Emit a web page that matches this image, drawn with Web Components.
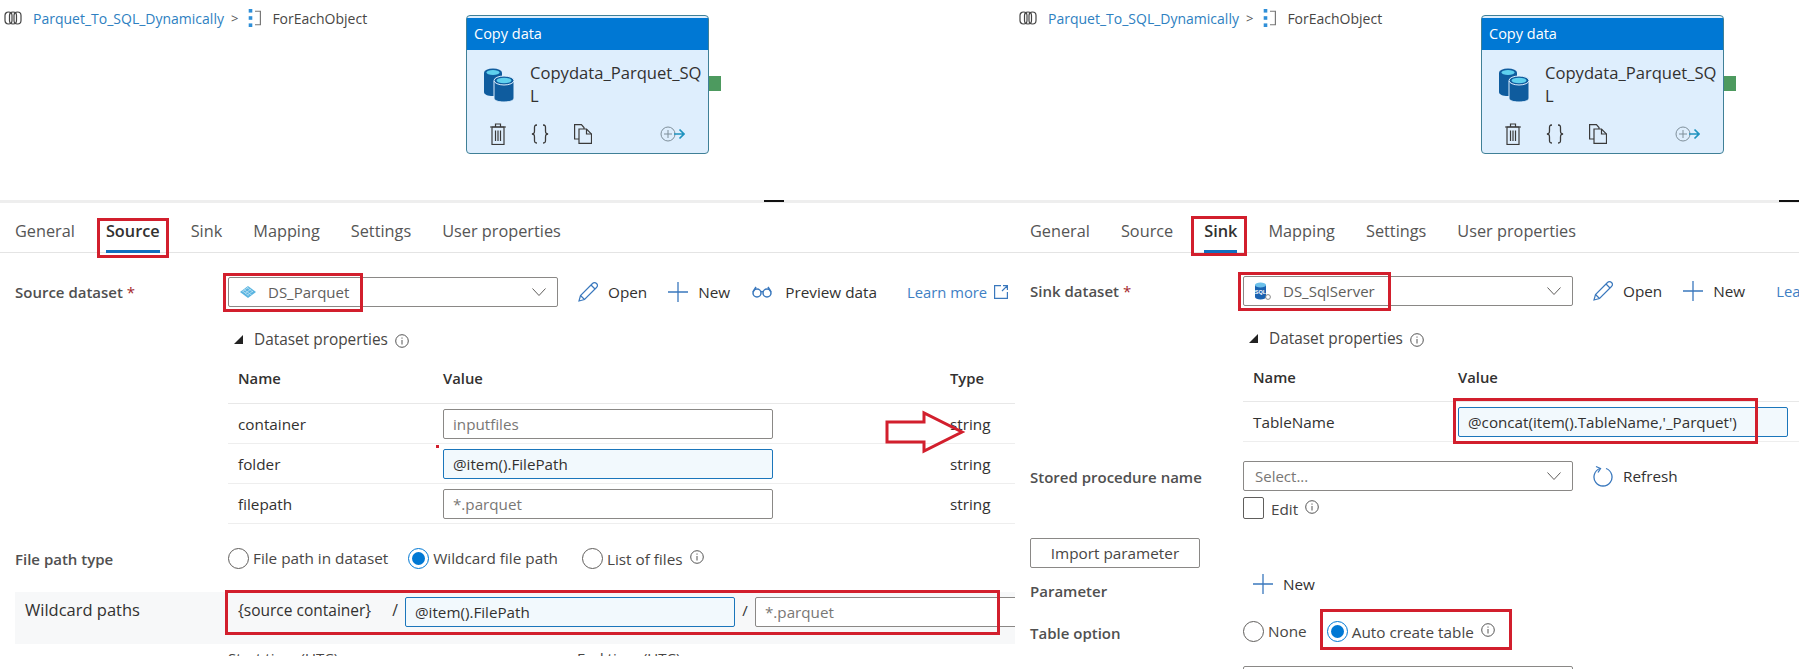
<!DOCTYPE html>
<html>
<head>
<meta charset="utf-8">
<title>Copy data</title>
<style>
  html, body { margin: 0; background: #fff; }
  body { font: 15px "Open Sans", sans-serif; color: #323130; }
</style>
</head>
<body>
<adf-split>
  <!-- source tab -->
  <adf-pane style="height:656px">
    <adf-canvas></adf-canvas>
    <adf-tabs items="General,Source,Sink,Mapping,Settings,User properties" active="Source"></adf-tabs>

    <adf-row label="Source dataset" required style="margin-top:24px">
      <adf-toolbar>
        <adf-dropdown><adf-icon name="parquet" w="16" h="16"></adf-icon>DS_Parquet</adf-dropdown>
        <adf-cmd icon="pencil">Open</adf-cmd>
        <adf-cmd icon="plus">New</adf-cmd>
        <adf-cmd icon="glasses" gap="13" style="margin-left:1px">Preview data</adf-cmd>
        <adf-link style="margin-left:9px">Learn more</adf-link>
      </adf-toolbar>
    </adf-row>

    <adf-props style="margin-top:20px">Dataset properties</adf-props>
    <adf-table type style="--head:53px">
      <adf-prop name="container" type="string"><adf-textbox placeholder>inputfiles</adf-textbox></adf-prop>
      <adf-prop name="folder" type="string"><adf-textbox focused>@item().FilePath</adf-textbox></adf-prop>
      <adf-prop name="filepath" type="string"><adf-textbox placeholder>*.parquet</adf-textbox></adf-prop>
    </adf-table>

    <adf-row label="File path type" nudge="2" style="margin-top:23px">
      <adf-radios>
        <adf-radio>File path in dataset</adf-radio>
        <adf-radio checked>Wildcard file path</adf-radio>
        <adf-radio style="margin-left:4px">List of files <adf-info></adf-info></adf-radio>
      </adf-radios>
    </adf-row>

    <adf-wildcard style="margin-top:23px">
      <adf-textbox focused slot="folder">@item().FilePath</adf-textbox>
      <adf-textbox placeholder slot="file">*.parquet</adf-textbox>
    </adf-wildcard>
    <adf-times></adf-times>

    <adf-mark x="97" y="218" w="72" h="40"></adf-mark>
    <adf-mark x="223" y="273" w="140" h="39"></adf-mark>
    <adf-mark x="225" y="590" w="775" h="45"></adf-mark>
    <adf-arrow></adf-arrow>
    <adf-dot></adf-dot>
  </adf-pane>

  <!-- sink tab -->
  <adf-pane style="height:669px">
    <adf-canvas></adf-canvas>
    <adf-tabs items="General,Source,Sink,Mapping,Settings,User properties" active="Sink"></adf-tabs>

    <adf-row label="Sink dataset" required style="margin-top:23px">
      <adf-toolbar>
        <adf-dropdown><adf-icon name="sql" w="16" h="18"></adf-icon>DS_SqlServer</adf-dropdown>
        <adf-cmd icon="pencil">Open</adf-cmd>
        <adf-cmd icon="plus">New</adf-cmd>
        <adf-link style="margin-left:10px">Learn more</adf-link>
      </adf-toolbar>
    </adf-row>

    <adf-props style="margin-top:20px">Dataset properties</adf-props>
    <adf-table style="--head:52px">
      <adf-prop name="TableName"><adf-textbox focused>@concat(item().TableName,'_Parquet')</adf-textbox></adf-prop>
    </adf-table>

    <adf-row label="Stored procedure name" nudge="2" style="margin-top:19px">
      <adf-toolbar>
        <adf-dropdown muted>Select...</adf-dropdown>
        <adf-cmd icon="refresh">Refresh</adf-cmd>
      </adf-toolbar>
    </adf-row>
    <adf-row style="margin-top:6px">
      <adf-check>Edit <adf-info></adf-info></adf-check>
    </adf-row>
    <adf-button style="margin:19px 0 0 15px">Import parameter</adf-button>
    <adf-row label="Parameter" nudge="14" style="margin-top:-1px;height:30px">
      <adf-cmd icon="plus" style="margin-left:10px;display:flex">New</adf-cmd>
    </adf-row>
    <adf-row label="Table option" nudge="4" style="margin-top:22px">
      <adf-radios>
        <adf-radio>None</adf-radio>
        <adf-radio checked>Auto create table <adf-info></adf-info></adf-radio>
      </adf-radios>
    </adf-row>
    <adf-row style="margin-top:23px">
      <adf-dropdown></adf-dropdown>
    </adf-row>

    <adf-mark x="176" y="216" w="56" h="40"></adf-mark>
    <adf-mark x="223" y="272" w="153" h="39"></adf-mark>
    <adf-mark x="438" y="398" w="305" h="46"></adf-mark>
    <adf-mark x="305" y="609" w="192" h="41"></adf-mark>
  </adf-pane>
</adf-split>

<script>
const BLUE = "#3a78bd";
const ICONS = {
  pipeline: `<svg viewBox="0 0 18 14" fill="none" stroke="#444" stroke-width="1.2"><rect x="1" y="1" width="7" height="12" rx="3.5"/><rect x="5.5" y="1" width="7" height="12" rx="3.5"/><rect x="10" y="1" width="7" height="12" rx="3.5"/></svg>`,
  foreach: `<svg viewBox="0 0 14 20"><rect y="0" width="4" height="4" fill="#2f8fd8"/><rect y="8" width="4" height="4" fill="#2f8fd8"/><rect y="16" width="4" height="4" fill="#2f8fd8"/><path d="M7 2.5h6v15H7" fill="none" stroke="#777" stroke-width="1.3"/></svg>`,
  cylinders: `<svg viewBox="0 0 32 36"><path d="M1 6v19c0 2.5 3.5 4 9 4s9-1.500 9-4V6z" fill="#0f5c9e"/><ellipse cx="10" cy="5.500" rx="9" ry="4" fill="#0f5c9e"/><ellipse cx="10" cy="5.500" rx="6.500" ry="2.500" fill="#5fd0ee"/><path d="M11 14v17c0 2.500 4 4 10 4s10-1.500 10-4V14z" fill="#0f5c9e" stroke="#deeefd" stroke-width="1"/><ellipse cx="21" cy="13.500" rx="10" ry="4.500" fill="#0f5c9e" stroke="#deeefd" stroke-width="1"/><ellipse cx="21" cy="13.500" rx="7.500" ry="2.800" fill="#5fd0ee"/></svg>`,
  trash: `<svg viewBox="0 0 16 22" fill="none" stroke="#3a3a3a" stroke-width="1.2"><path d="M0 4h16M5.500 4V1h5v3"/><rect x="2" y="4" width="12" height="17.500"/><path d="M5.500 7.500v10.500M8 7.500v10.500M10.500 7.500v10.500"/></svg>`,
  braces: `<svg viewBox="0 0 18 20" fill="none" stroke="#3a3a3a" stroke-width="1.300"><path d="M6 1C3 1 3.500 3 3.500 6S3.500 9.500 1 10c2.500.5 2.500 1 2.500 4s-.5 5 2.500 5"/><path d="M12 1c3 0 2.500 2 2.500 5s0 3.500 2.500 4c-2.500.5-2.500 1-2.500 4s.5 5-2.500 5"/></svg>`,
  copy: `<svg viewBox="0 0 18 20" fill="none" stroke="#3a3a3a" stroke-width="1.200"><path d="M5 15H.6V.6h6.800L10 3.500V5"/><path d="M5 5h7.500l5 5v9.400H5z"/><path d="M12.500 5v5h5"/></svg>`,
  addout: `<svg viewBox="0 0 25 16" fill="none"><circle cx="8" cy="8" r="7" stroke="#7f8f9a" stroke-width="1"/><path d="M4 8h8M8 4v8" stroke="#7f8f9a"/><path d="M14 8h10M19.500 3.500 24 8l-4.500 4.500" stroke="#1f93bf" stroke-width="1.700"/></svg>`,
  pencil: `<svg viewBox="0 0 20 20" fill="none" stroke="${BLUE}" stroke-width="1.200"><path d="M1 19l1.500-5.500L14.500 1.500a2.800 2.800 0 0 1 4 4L6.500 17.500z"/><path d="M2.500 13.500l4 4M13 3l4 4"/></svg>`,
  plus: `<svg viewBox="0 0 20 20" stroke="${BLUE}" stroke-width="1.300"><path d="M0 10h20M10 0v20"/></svg>`,
  glasses: `<svg viewBox="0 0 20 12" fill="none" stroke="${BLUE}" stroke-width="1.500"><circle cx="5" cy="7" r="4"/><circle cx="15" cy="7" r="4"/><path d="M9 6c.7-.6 1.300-.6 2 0M1 6l3-5M19 6l-3-5"/></svg>`,
  refresh: `<svg viewBox="0 0 20 22" fill="none" stroke="${BLUE}" stroke-width="1.300"><path d="M7 3.500a9 9 0 1 0 6 0"/><path d="M3 1.500l4.500 2-2.500 4"/></svg>`,
  external: `<svg viewBox="0 0 14 14" fill="none" stroke="${BLUE}" stroke-width="1.200"><path d="M7 .6H.6v12.800h12.800V7M8 6 13.400.6M9 .6h4.400V5"/></svg>`,
  chevron: `<svg viewBox="0 0 14 8" fill="none" stroke="#605e5c" stroke-width="1"><path d="M.5.5 7 7.500 13.500.5"/></svg>`,
  parquet: `<svg viewBox="0 0 16 16"><path d="M8 2l8 6-8 6-8-6z" fill="#59b4e0"/><path d="M4 5.500l8 6M7 3.500l6 4.500M2.500 7l6 4.500M8.500 3l-6 4.500M11 5l-6 4.500M13 7l-5.500 4" stroke="#c6e6f6" stroke-width=".7"/></svg>`,
  sql: `<svg viewBox="0 0 16 18"><path d="M0 3v12c0 1.500 2.500 2.500 5.500 2.500s5.500-1 5.500-2.500V3z" fill="#1a62b0"/><ellipse cx="5.500" cy="3" rx="5.500" ry="2.500" fill="#6cc0ea"/><text x="5.500" y="11.500" font-size="5.500" font-weight="700" fill="#fff" text-anchor="middle" font-family="Liberation Sans, sans-serif">SQL</text><circle cx="13" cy="15" r="2.400" fill="none" stroke="#8a8a8a"/></svg>`,
};

class AdfIcon extends HTMLElement {
  connectedCallback() {
    const w = this.getAttribute("w") || 16;
    const h = this.getAttribute("h") || w;
    this.attachShadow({ mode: "open" }).innerHTML = `
      <style>
        :host { display: inline-flex; flex: none; width: ${w}px; height: ${h}px; }
        svg { display: block; width: 100%; height: 100%; }
      </style>${ICONS[this.getAttribute("name")]}`;
  }
}

class AdfSplit extends HTMLElement {
  constructor() {
    super();
    this.attachShadow({ mode: "open" }).innerHTML = `
      <style>:host { display: grid; grid-template-columns: 1015px 784px; align-items: start; }</style>
      <slot></slot>`;
  }
}

class AdfPane extends HTMLElement {
  constructor() {
    super();
    this.attachShadow({ mode: "open" }).innerHTML = `
      <style>:host { display: block; position: relative; overflow: hidden; }</style>
      <slot></slot>`;
  }
}

// top part: breadcrumb and the activity on the pipeline canvas
class AdfCanvas extends HTMLElement {
  constructor() {
    super();
    this.attachShadow({ mode: "open" }).innerHTML = `
      <style>
        :host { display: block; position: relative; height: 200px; }
        .crumb { display: flex; align-items: center; height: 36px; padding-left: 4px; font-size: 14px; white-space: nowrap; }
        .link { color: #2e7fc1; margin-left: 11px; }
        .sep { color: #555; margin: 0 10px 0 7px; font-size: 13px; }
        .name { color: #484644; margin-left: 10px; }
        .card { position: absolute; left: 466px; top: 15px; width: 243px; height: 139px; box-sizing: border-box;
                border: 1px solid #3f8097; border-radius: 4px; background: #deeefd; }
        .head { margin-top: 2px; height: 32px; padding-left: 7px; display: flex; align-items: center;
                background: #0078d4; color: #fff; font-size: 14.500px; padding-bottom: 1px; box-sizing: border-box; }
        .body { display: flex; height: 73px; padding: 17px 0 0 16px; box-sizing: border-box; gap: 15px; }
        .title { width: 174px; font-size: 16.600px; line-height: 23px; word-break: break-all; color: #323130; margin-top: -6px; }
        .actions { display: flex; align-items: center; padding-left: 23px; }
        .stub { position: absolute; right: -13px; top: 60px; width: 12px; height: 15px; background: #4d9a5f; }
      </style>
      <div class="crumb">
        <adf-icon name="pipeline" w="18" h="14"></adf-icon>
        <span class="link">Parquet_To_SQL_Dynamically</span>
        <span class="sep">&gt;</span>
        <adf-icon name="foreach" w="14" h="18"></adf-icon>
        <span class="name">ForEachObject</span>
      </div>
      <div class="card">
        <div class="head">Copy data</div>
        <div class="body">
          <adf-icon name="cylinders" w="32" h="36"></adf-icon>
          <div class="title">Copydata_Parquet_SQL</div>
        </div>
        <div class="actions">
          <adf-icon name="trash" w="16" h="22"></adf-icon>
          <adf-icon name="braces" w="18" h="20" style="margin-left:25px"></adf-icon>
          <adf-icon name="copy" w="18" h="20" style="margin-left:25px"></adf-icon>
          <adf-icon name="addout" w="25" h="16" style="margin-left:68px"></adf-icon>
        </div>
        <div class="stub"></div>
      </div>
      <adf-grip></adf-grip>`;
  }
}

class AdfGrip extends HTMLElement {
  constructor() {
    super();
    this.attachShadow({ mode: "open" }).innerHTML = `
      <style>:host { position: absolute; left: 764px; bottom: -2px; width: 20px; height: 2px; background: #111; z-index: 1; }</style>`;
  }
}

class AdfTabs extends HTMLElement {
  connectedCallback() {
    const active = this.getAttribute("active");
    const tabs = this.getAttribute("items").split(",").map(t =>
      `<div class="tab ${t === active ? "on" : ""}">${t}</div>`).join("");
    this.attachShadow({ mode: "open" }).innerHTML = `
      <style>
        :host { display: flex; box-sizing: border-box; height: 53px; gap: 31px; padding-left: 15px;
                border-top: 3px solid #eee; border-bottom: 1px solid #e4e4e4; }
        .tab { position: relative; padding-top: 17px; font-size: 16.300px; line-height: 22px; color: #555; white-space: nowrap; }
        .on { font-weight: 600; color: #323130; }
        .on::after { content: ""; position: absolute; left: 0; right: 0; bottom: -1px; height: 3px; background: #106ebe; }
      </style>${tabs}`;
  }
}

class AdfRow extends HTMLElement {
  connectedCallback() {
    const label = this.getAttribute("label") || "";
    const star = this.hasAttribute("required") ? ` <span class="req">*</span>` : "";
    const nudge = this.getAttribute("nudge") || 0;
    this.attachShadow({ mode: "open" }).innerHTML = `
      <style>
        :host { display: grid; grid-template-columns: 213px 1fr; padding-left: 15px; align-items: center; }
        .label { font-weight: 600; font-size: 15px; color: #505050; padding-top: ${nudge}px; white-space: nowrap; }
        .req { color: #a4262c; font-weight: 400; }
        .field { display: flex; }
      </style>
      <div class="label">${label}${star}</div>
      <div class="field"><slot></slot></div>`;
  }
}

class AdfToolbar extends HTMLElement {
  constructor() {
    super();
    this.attachShadow({ mode: "open" }).innerHTML = `
      <style>
        :host { display: flex; align-items: center; gap: 21px; white-space: nowrap; }
        ::slotted(adf-dropdown) { margin-right: -1px; }
      </style>
      <slot></slot>`;
  }
}

class AdfDropdown extends HTMLElement {
  connectedCallback() {
    const color = this.hasAttribute("muted") ? "#797775" : "#605e5c";
    this.attachShadow({ mode: "open" }).innerHTML = `
      <style>
        :host { display: flex; flex: none; align-items: center; gap: 12px; position: relative; width: 330px; height: 30px;
                box-sizing: border-box; padding-left: 11px; border: 1px solid #8a8886; border-radius: 2px;
                color: ${color}; font-size: 15px; background: #fff; }
        adf-icon { position: absolute; right: 11px; top: 10px; }
      </style>
      <slot></slot>
      <adf-icon name="chevron" w="14" h="8"></adf-icon>`;
  }
}

class AdfCmd extends HTMLElement {
  connectedCallback() {
    const icon = this.getAttribute("icon");
    const gap = this.getAttribute("gap") || 10;
    const h = icon === "glasses" ? 12 : icon === "refresh" ? 22 : 20;
    this.attachShadow({ mode: "open" }).innerHTML = `
      <style>:host { display: inline-flex; flex: none; align-items: center; gap: ${gap}px; font-size: 15.300px; color: #323130; white-space: nowrap; }</style>
      <adf-icon name="${icon}" w="20" h="${h}"></adf-icon><slot></slot>`;
  }
}

class AdfLink extends HTMLElement {
  constructor() {
    super();
    this.attachShadow({ mode: "open" }).innerHTML = `
      <style>:host { display: inline-flex; flex: none; align-items: center; gap: 7px; font-size: 14.800px; color: #3f7fc4; white-space: nowrap; }</style>
      <slot></slot><adf-icon name="external" w="14" h="14"></adf-icon>`;
  }
}

class AdfInfo extends HTMLElement {
  constructor() {
    super();
    this.attachShadow({ mode: "open" }).innerHTML = `
      <style>:host { display: inline-block; width: 14px; height: 14px; vertical-align: 1px; margin-left: 3px; }</style>
      <svg viewBox="0 0 14 14" width="14" height="14" fill="none" stroke="#555" stroke-width="1"><circle cx="7" cy="7" r="6.300"/><path d="M7 6v4.500M7 3.500v1.200"/></svg>`;
  }
}

class AdfProps extends HTMLElement {
  constructor() {
    super();
    this.attachShadow({ mode: "open" }).innerHTML = `
      <style>
        :host { display: flex; align-items: center; height: 24px; padding-left: 234px; font-size: 15.400px; font-weight: 500; color: #484644; white-space: nowrap; }
        i { width: 0; height: 0; border-style: solid; border-width: 0 0 9px 9px; border-color: transparent transparent #222 transparent; margin-right: 11px; }
        adf-info { margin-left: 7px; }
      </style>
      <i></i><slot></slot><adf-info></adf-info>`;
  }
}

class AdfTable extends HTMLElement {
  connectedCallback() {
    const type = this.hasAttribute("type") ? `<div class="type">Type</div>` : "";
    this.attachShadow({ mode: "open" }).innerHTML = `
      <style>
        :host { display: block; margin-left: 228px; }
        .head { display: grid; grid-template-columns: 215px 507px auto; height: var(--head, 49px); box-sizing: border-box; align-items: center;
                padding-top: 2px; border-bottom: 1px solid #e8e8e8; font-size: 14.800px; font-weight: 600; color: #323130; }
        .head div:first-child { padding-left: 10px; }
      </style>
      <div class="head"><div>Name</div><div>Value</div>${type}</div>
      <slot></slot>`;
  }
}

class AdfProp extends HTMLElement {
  connectedCallback() {
    const type = this.getAttribute("type") || "";
    this.attachShadow({ mode: "open" }).innerHTML = `
      <style>
        :host { display: grid; grid-template-columns: 215px 507px auto; height: 39px; align-items: center;
                border-bottom: 1px solid #eee; font-size: 15.300px; color: #323130; }
        .name { padding-left: 10px; }
        ::slotted(adf-textbox) { margin-top: 1px; }
      </style>
      <div class="name">${this.getAttribute("name")}</div>
      <div><slot></slot></div>
      <div>${type}</div>`;
  }
}

class AdfTextbox extends HTMLElement {
  connectedCallback() {
    const focused = this.hasAttribute("focused");
    const placeholder = this.hasAttribute("placeholder");
    this.attachShadow({ mode: "open" }).innerHTML = `
      <style>
        :host { display: flex; align-items: center; width: 330px; height: 30px; box-sizing: border-box; padding-left: 9px;
                border: 1px solid ${focused ? "#1b76bb" : "#8a8886"}; border-radius: 2px;
                background: ${focused ? "#f2f9fd" : "#fff"}; color: ${placeholder ? "#797775" : "#323130"};
                font-size: 15.200px; white-space: nowrap; }
      </style><slot></slot>`;
  }
}

class AdfRadios extends HTMLElement {
  constructor() {
    super();
    this.attachShadow({ mode: "open" }).innerHTML = `
      <style>:host { display: flex; align-items: center; gap: 20px; white-space: nowrap; }</style><slot></slot>`;
  }
}

class AdfRadio extends HTMLElement {
  connectedCallback() {
    const on = this.hasAttribute("checked");
    this.attachShadow({ mode: "open" }).innerHTML = `
      <style>
        :host { display: inline-flex; align-items: center; gap: 4px; font-size: 15.300px; color: #484644; }
        i { width: 21px; height: 21px; box-sizing: border-box; border-radius: 50%; flex: none; display: grid; place-items: center;
            border: 1px solid ${on ? "#0078d4" : "#605e5c"}; }
        b { width: 13px; height: 13px; border-radius: 50%; background: #0078d4; }
      </style>
      <i>${on ? "<b></b>" : ""}</i><span><slot></slot></span>`;
  }
}

class AdfCheck extends HTMLElement {
  constructor() {
    super();
    this.attachShadow({ mode: "open" }).innerHTML = `
      <style>
        :host { display: flex; align-items: center; gap: 7px; font-size: 15.300px; color: #484644; white-space: nowrap; }
        i { width: 21px; height: 22px; box-sizing: border-box; border: 1px solid #605e5c; border-radius: 2px; }
      </style>
      <i></i><span><slot></slot></span>`;
  }
}

class AdfButton extends HTMLElement {
  constructor() {
    super();
    this.attachShadow({ mode: "open" }).innerHTML = `
      <style>
        :host { display: flex; align-items: center; justify-content: center; width: 170px; height: 30px; box-sizing: border-box;
                border: 1px solid #8a8886; border-radius: 2px; font-size: 15.300px; color: #484644; }
      </style><slot></slot>`;
  }
}

class AdfWildcard extends HTMLElement {
  constructor() {
    super();
    this.attachShadow({ mode: "open" }).innerHTML = `
      <style>
        :host { display: flex; height: 52px; margin-left: 15px; background: #f7f8f9; color: #323130; white-space: nowrap; }
        .label { flex: none; width: 213px; padding-left: 10px; box-sizing: border-box; line-height: 36px; font-size: 16.500px; }
        .src { flex: none; width: 177px; box-sizing: border-box; padding: 0 7px 0 10px; line-height: 36px; display: flex; justify-content: space-between; font-size: 15.500px; }
        .box { padding-top: 5px; flex: none; }
        .slash { flex: none; width: 20px; text-align: center; line-height: 36px; }
      </style>
      <div class="label">Wildcard paths</div>
      <div class="src"><span>{source container}</span><span>/</span></div>
      <div class="box"><slot name="folder"></slot></div>
      <div class="slash">/</div>
      <div class="box"><slot name="file"></slot></div>`;
  }
}

class AdfTimes extends HTMLElement {
  constructor() {
    super();
    this.attachShadow({ mode: "open" }).innerHTML = `
      <style>
        :host { display: flex; height: 28px; align-items: center; padding-left: 228px; font-size: 15px; font-weight: 500; color: #484644; }
        div { width: 349px; }
      </style>
      <div>Start time (UTC)</div><div>End time (UTC)</div>`;
  }
}

// red annotations lying over the screenshot
class AdfMark extends HTMLElement {
  connectedCallback() {
    const a = n => this.getAttribute(n);
    this.attachShadow({ mode: "open" }).innerHTML = `
      <style>
        :host { position: absolute; left: ${a("x")}px; top: ${a("y")}px; width: ${a("w")}px; height: ${a("h")}px;
                box-sizing: border-box; border: 3px solid #d21f2d; pointer-events: none; }
      </style>`;
  }
}

class AdfArrow extends HTMLElement {
  constructor() {
    super();
    this.attachShadow({ mode: "open" }).innerHTML = `
      <style>:host { position: absolute; left: 884px; top: 410px; width: 84px; height: 44px; }</style>
      <svg width="84" height="44" fill="none" stroke="#d21f2d" stroke-width="3"><path d="M3 12h37V3l38 19-38 19v-9H3z"/></svg>`;
  }
}

class AdfDot extends HTMLElement {
  constructor() {
    super();
    this.attachShadow({ mode: "open" }).innerHTML = `
      <style>:host { position: absolute; left: 436px; top: 445px; width: 3px; height: 3px; background: #d21f2d; }</style>`;
  }
}

const TAGS = {
  "adf-icon": AdfIcon, "adf-split": AdfSplit, "adf-pane": AdfPane, "adf-canvas": AdfCanvas, "adf-grip": AdfGrip,
  "adf-tabs": AdfTabs, "adf-row": AdfRow, "adf-toolbar": AdfToolbar, "adf-dropdown": AdfDropdown, "adf-cmd": AdfCmd,
  "adf-link": AdfLink, "adf-info": AdfInfo, "adf-props": AdfProps, "adf-table": AdfTable, "adf-prop": AdfProp,
  "adf-textbox": AdfTextbox, "adf-radios": AdfRadios, "adf-radio": AdfRadio, "adf-check": AdfCheck,
  "adf-button": AdfButton, "adf-wildcard": AdfWildcard, "adf-times": AdfTimes, "adf-mark": AdfMark,
  "adf-arrow": AdfArrow, "adf-dot": AdfDot,
};
Object.entries(TAGS).forEach(([tag, cls]) => customElements.define(tag, cls));
</script>
</body>
</html>
